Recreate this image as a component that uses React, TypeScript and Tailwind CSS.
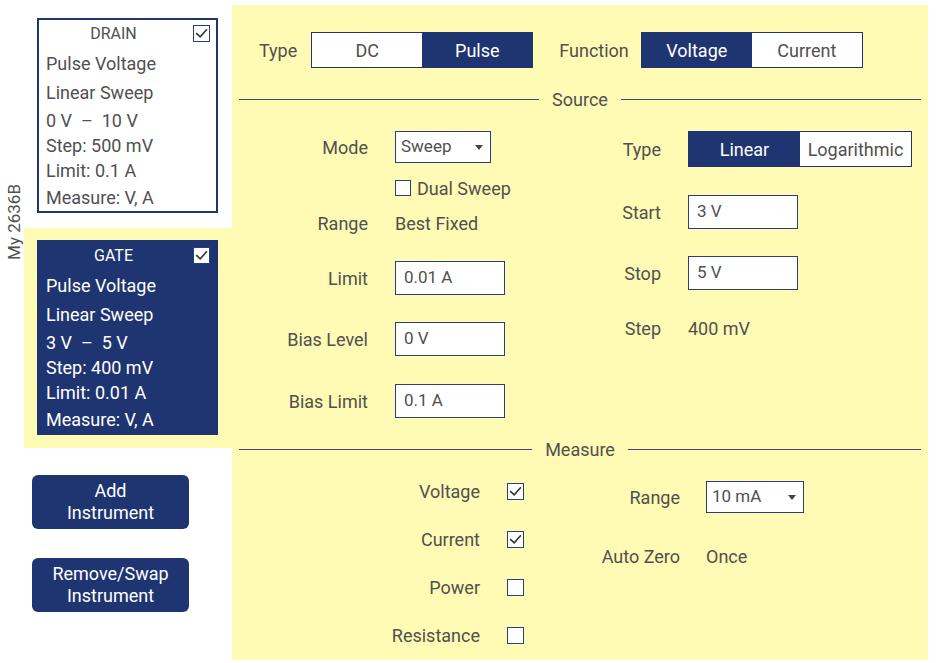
import React from 'react';

const NAVY = 'bg-[#1f3571]';

const Check = ({ className = '' }: { className?: string }) => (
  <svg viewBox="0 0 16 16" className={className} fill="none">
    <path d="M3 8.2 L6.6 11.6 L13.2 4.2" stroke="#3a3a3a" strokeWidth="1.8" strokeLinecap="square" />
  </svg>
);

const Box = ({ checked, size = 'w-[17px] h-[17px]' }: { checked?: boolean; size?: string }) => (
  <div className={`${size} bg-white border-[1.5px] border-[#2a3f7a] flex items-center justify-center`}>
    {checked && <Check className="w-full h-full" />}
  </div>
);

const cardLines = (range: string, step: string, limit: string) => [
  { text: 'Pulse Voltage', h: 'h-[30px]' },
  { text: 'Linear Sweep', h: 'h-[28px]' },
  { text: range, h: 'h-[28px]' },
  { text: step, h: 'h-[22px]' },
  { text: limit, h: 'h-[28px]' },
  { text: 'Measure: V, A', h: 'h-[26px]' },
];

const Card = ({ title, range, step, limit, active }: { title: string; range: string; step: string; limit: string; active?: boolean }) => (
  <div
    className={`w-[181px] h-[195px] border-2 border-[#1f3571] pl-[7px] flex flex-col ${
      active ? 'bg-[#1f3571] text-white' : 'bg-white text-[#505050]'
    }`}
  >
    <div className="h-[28px] flex items-center">
      <div className="flex-1 text-center text-[16px] pl-[2px] pr-[14px]">{title}</div>
      <div className="mr-[6px] -mt-[2px]">
        <Box checked />
      </div>
    </div>
    {cardLines(range, step, limit).map((l, i) => (
      <div key={i} className={`${l.h} flex items-center text-[18px] whitespace-pre`}>
        {l.text}
      </div>
    ))}
  </div>
);

const Segment = ({ items, active, w = 'w-[110px]', h = 'h-[36px]' }: { items: string[]; active: number; w?: string; h?: string }) => (
  <div className={`flex border-[1.5px] border-[#1f3571] ${h}`}>
    {items.map((t, i) => (
      <div
        key={t}
        className={`${w} flex items-center justify-center text-[18px] ${
          i === active ? 'bg-[#1f3571] text-white' : 'bg-white text-[#505050]'
        }`}
      >
        {t}
      </div>
    ))}
  </div>
);

const Divider = ({ label }: { label: string }) => (
  <div className="flex items-center px-[7px] h-[24px]">
    <div className="flex-1 h-px bg-[#3b4a7a]" />
    <div className="px-[13px] text-[18px] text-[#505050]">{label}</div>
    <div className="flex-1 h-px bg-[#3b4a7a]" />
  </div>
);

const Input = ({ value, w = 'w-[110px]' }: { value: string; w?: string }) => (
  <div className={`${w} h-[34px] bg-white border-[1.5px] border-[#2a3f7a] flex items-center px-[8px] text-[17px] text-[#505050]`}>
    {value}
  </div>
);

const Select = ({ value, w }: { value: string; w: string }) => (
  <div className={`${w} h-[32px] bg-white border-[1.5px] border-[#2a3f7a] flex items-center justify-between pl-[5px] pr-[7px] text-[17px] text-[#505050]`}>
    <span>{value}</span>
    <svg viewBox="0 0 10 6" className="w-[8px] h-[5px]">
      <path d="M0 0 L10 0 L5 6 Z" fill="#444" />
    </svg>
  </div>
);

const Label = ({ children, w }: { children: React.ReactNode; w: string }) => (
  <div className={`${w} shrink-0 text-right text-[18px] text-[#505050]`}>{children}</div>
);

export default function App() {
  return (
    <div className="w-[940px] h-[663px] bg-white flex font-[family-name:Roboto,sans-serif] overflow-hidden">
      {/* instrument column */}
      <div className="w-[24px] shrink-0 flex items-start pt-[184px] pl-[6px]">
        <div className="[writing-mode:vertical-rl] rotate-180 text-[17px] text-[#505050] leading-none">My 2636B</div>
      </div>
      <div className="w-[208px] shrink-0 flex flex-col">
        <div className="h-[228px] pt-[18px] pl-[13px]">
          <Card title="DRAIN" range="0 V  –  10 V" step="Step: 500 mV" limit="Limit: 0.1 A" />
        </div>
        <div className="h-[220px] bg-[#fffbb5] pt-[12px] pl-[13px]">
          <Card title="GATE" range="3 V  –  5 V" step="Step: 400 mV" limit="Limit: 0.01 A" active />
        </div>
        <div className="pl-[8px] pt-[27px] flex flex-col gap-[29px]">
          {['Add|Instrument', 'Remove/Swap|Instrument'].map((t) => (
            <button
              key={t}
              className={`w-[157px] h-[54px] rounded-[6px] ${NAVY} text-white text-[18px] leading-[22px] flex flex-col items-center justify-center`}
            >
              {t.split('|').map((s) => (
                <span key={s}>{s}</span>
              ))}
            </button>
          ))}
        </div>
      </div>

      {/* settings panel */}
      <div className="w-[696px] h-[655px] mt-[5px] bg-[#fffbb5] flex flex-col">
        <div className="flex items-center pl-[27px] mt-[27px] h-[36px]">
          <div className="text-[18px] text-[#505050] mr-[14px]">Type</div>
          <Segment items={['DC', 'Pulse']} active={1} />
          <div className="text-[18px] text-[#505050] ml-[26px] mr-[12px]">Function</div>
          <Segment items={['Voltage', 'Current']} active={0} />
        </div>

        <div className="mt-[19px]">
          <Divider label="Source" />
        </div>

        <div className="flex mt-[20px]">
          {/* left source column */}
          <div className="w-[360px] flex flex-col">
            <div className="flex items-center h-[32px] gap-[27px]">
              <Label w="w-[136px]">Mode</Label>
              <Select value="Sweep" w="w-[96px]" />
            </div>
            <div className="flex items-center h-[20px] mt-[15px] pl-[163px] gap-[6px]">
              <Box size="w-[16px] h-[16px]" />
              <span className="text-[18px] text-[#505050]">Dual Sweep</span>
            </div>
            <div className="flex items-center h-[24px] mt-[13px] gap-[27px]">
              <Label w="w-[136px]">Range</Label>
              <span className="text-[18px] text-[#505050]">Best Fixed</span>
            </div>
            <div className="flex items-center h-[34px] mt-[26px] gap-[27px]">
              <Label w="w-[136px]">Limit</Label>
              <Input value="0.01 A" />
            </div>
            <div className="flex items-center h-[34px] mt-[27px] gap-[27px]">
              <Label w="w-[136px]">Bias Level</Label>
              <Input value="0 V" />
            </div>
            <div className="flex items-center h-[34px] mt-[28px] gap-[27px]">
              <Label w="w-[136px]">Bias Limit</Label>
              <Input value="0.1 A" />
            </div>
          </div>

          {/* right source column */}
          <div className="flex flex-col">
            <div className="flex items-center h-[36px] gap-[27px]">
              <Label w="w-[69px]">Type</Label>
              <Segment items={['Linear', 'Logarithmic']} active={0} w="w-[111px]" />
            </div>
            <div className="flex items-center h-[34px] mt-[28px] gap-[27px]">
              <Label w="w-[69px]">Start</Label>
              <Input value="3 V" />
            </div>
            <div className="flex items-center h-[34px] mt-[27px] gap-[27px]">
              <Label w="w-[69px]">Stop</Label>
              <Input value="5 V" />
            </div>
            <div className="flex items-center h-[24px] mt-[26px] gap-[27px]">
              <Label w="w-[69px]">Step</Label>
              <span className="text-[18px] text-[#505050]">400 mV</span>
            </div>
          </div>
        </div>

        <div className="mt-[19px]">
          <Divider label="Measure" />
        </div>

        <div className="flex mt-[18px]">
          <div className="w-[360px] flex flex-col gap-[24px]">
            {[
              ['Voltage', true],
              ['Current', true],
              ['Power', false],
              ['Resistance', false],
            ].map(([t, c]) => (
              <div key={t as string} className="flex items-center h-[24px] gap-[27px]">
                <Label w="w-[248px]">{t as string}</Label>
                <Box checked={c as boolean} size="w-[17px] h-[17px]" />
              </div>
            ))}
          </div>
          <div className="flex flex-col pt-[2px]">
            <div className="flex items-center h-[32px] gap-[26px]">
              <Label w="w-[88px]">Range</Label>
              <Select value="10 mA" w="w-[98px]" />
            </div>
            <div className="flex items-center h-[24px] mt-[31px] gap-[26px]">
              <Label w="w-[88px]">Auto Zero</Label>
              <span className="text-[18px] text-[#505050]">Once</span>
            </div>
          </div>
        </div>
      </div>
    </div>
  );
}
